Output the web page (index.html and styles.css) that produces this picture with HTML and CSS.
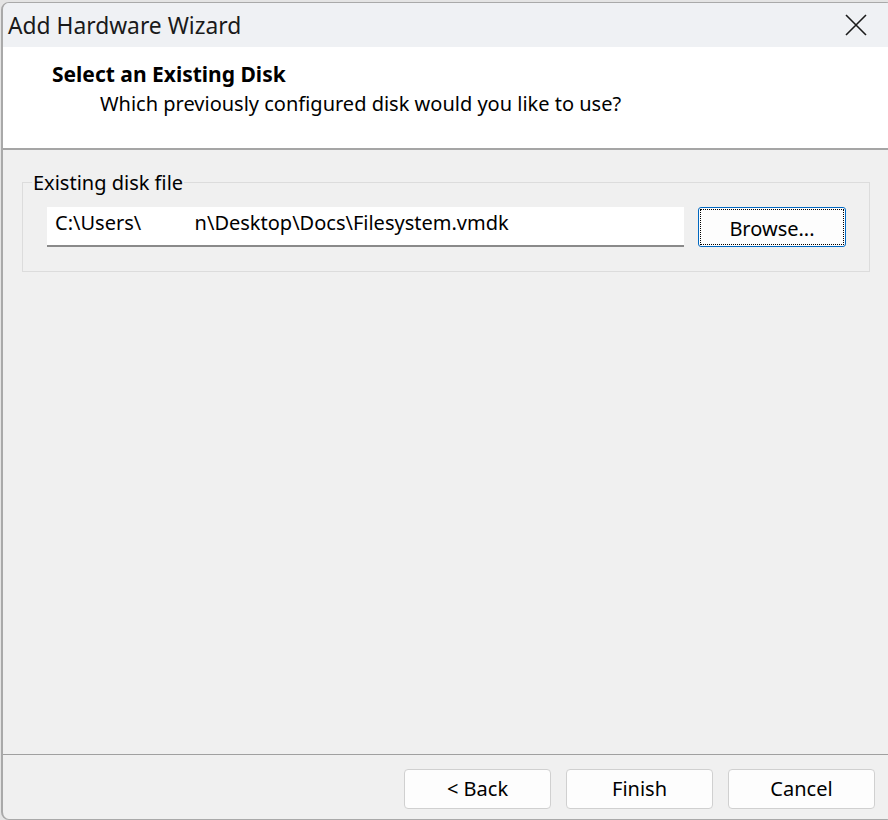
FILE: index.html
```html
<!DOCTYPE html>
<html lang="en">
<head>
    <meta charset="UTF-8">
    <title>Add Hardware Wizard</title>
    <link rel="stylesheet" href="styles.css">
</head>
<body>
    <div class="window">
        <div class="titlebar">
            <span class="title">Add Hardware Wizard</span>
            <svg class="close" width="22" height="22" viewBox="0 0 22 22">
                <path d="M1 1 L21 21 M21 1 L1 21" stroke="#1b1b1b" stroke-width="1.6" fill="none"/>
            </svg>
        </div>

        <div class="header">
            <h1>Select an Existing Disk</h1>
            <p>Which previously configured disk would you like to use?</p>
        </div>

        <div class="content">
            <fieldset class="group">
                <legend>Existing disk file</legend>
                <div class="file-row">
                    <div class="path-box">C:\Users\<span class="redact">admi</span>n\Desktop\Docs\Filesystem.vmdk</div>
                    <button class="btn focused"><span>Browse...</span></button>
                </div>
            </fieldset>
        </div>

        <div class="footer">
            <button class="btn">&lt; Back</button>
            <button class="btn">Finish</button>
            <button class="btn">Cancel</button>
        </div>
    </div>
</body>
</html>
```

FILE: styles.css
```css
body {
    margin: 0;
    background: #e4e4e4;
    font-family: "Noto Sans", "Open Sans", sans-serif;
    color: #000;
    overflow: hidden;
}
.window {
    margin: 2px 0 0 1px;
    width: 890px;
    height: 816px;
    border: 1px solid #a9a9a9;
    border-left-width: 2px;
    border-radius: 8px;
    overflow: hidden;
    background: #f0f0f0;
    display: flex;
    flex-direction: column;
}
.titlebar {
    height: 44px;
    background: #eff1f4;
    display: flex;
    align-items: center;
    justify-content: space-between;
    padding: 0 26px 0 5px;
    flex-shrink: 0;
}
.title {
    font-size: 22.8px;
    color: #1a1a1a;
}
.close {
    display: block;
}
.header {
    height: 103px;
    background: #fff;
    border-bottom: 2px solid #a5a5a5;
    flex-shrink: 0;
    box-sizing: border-box;
    padding: 13px 0 0 49px;
}
.header h1 {
    margin: 0;
    font-size: 21px;
    font-weight: bold;
}
.header p {
    margin: 2px 0 0 48px;
    font-size: 20px;
}
.content {
    flex: 1;
    padding: 19px 17px 0 19px;
}
.group {
    margin: 0;
    width: 848px;
    box-sizing: border-box;
    border: 1px solid #dcdcdc;
    padding: 11px 23px 24px 24px;
}
.group legend {
    font-size: 20px;
    padding: 0 1px;
    margin-left: -15px;
}
.file-row {
    display: flex;
    gap: 14px;
}
.path-box {
    width: 637px;
    height: 40px;
    box-sizing: border-box;
    background: #fff;
    border-bottom: 2px solid #8a8a8a;
    font-size: 20px;
    padding: 2px 0 0 8px;
    white-space: nowrap;
}
.redact {
    color: #fff;
    text-shadow: 0 0 4px #fff;
    padding-right: 6px;
}
.btn {
    width: 147px;
    height: 40px;
    background: #fdfdfd;
    border: 1px solid #d0d0d0;
    border-radius: 4px;
    font-family: "Noto Sans", "Open Sans", sans-serif;
    font-size: 20px;
    color: #000;
    padding: 0 0 2px;
}
.btn.focused {
    width: 148px;
    border: 1px solid #0067c0;
    border-radius: 3px;
    padding: 1px;
}
.btn.focused span {
    display: flex;
    align-items: center;
    justify-content: center;
    height: 100%;
    box-sizing: border-box;
    border: 1px dotted #000;
    padding-top: 2px;
}
.footer {
    height: 65px;
    border-top: 1px solid #a0a0a0;
    flex-shrink: 0;
    display: flex;
    justify-content: flex-start;
    gap: 15px;
    padding: 14px 0 0 401px;
    box-sizing: border-box;
}
```
